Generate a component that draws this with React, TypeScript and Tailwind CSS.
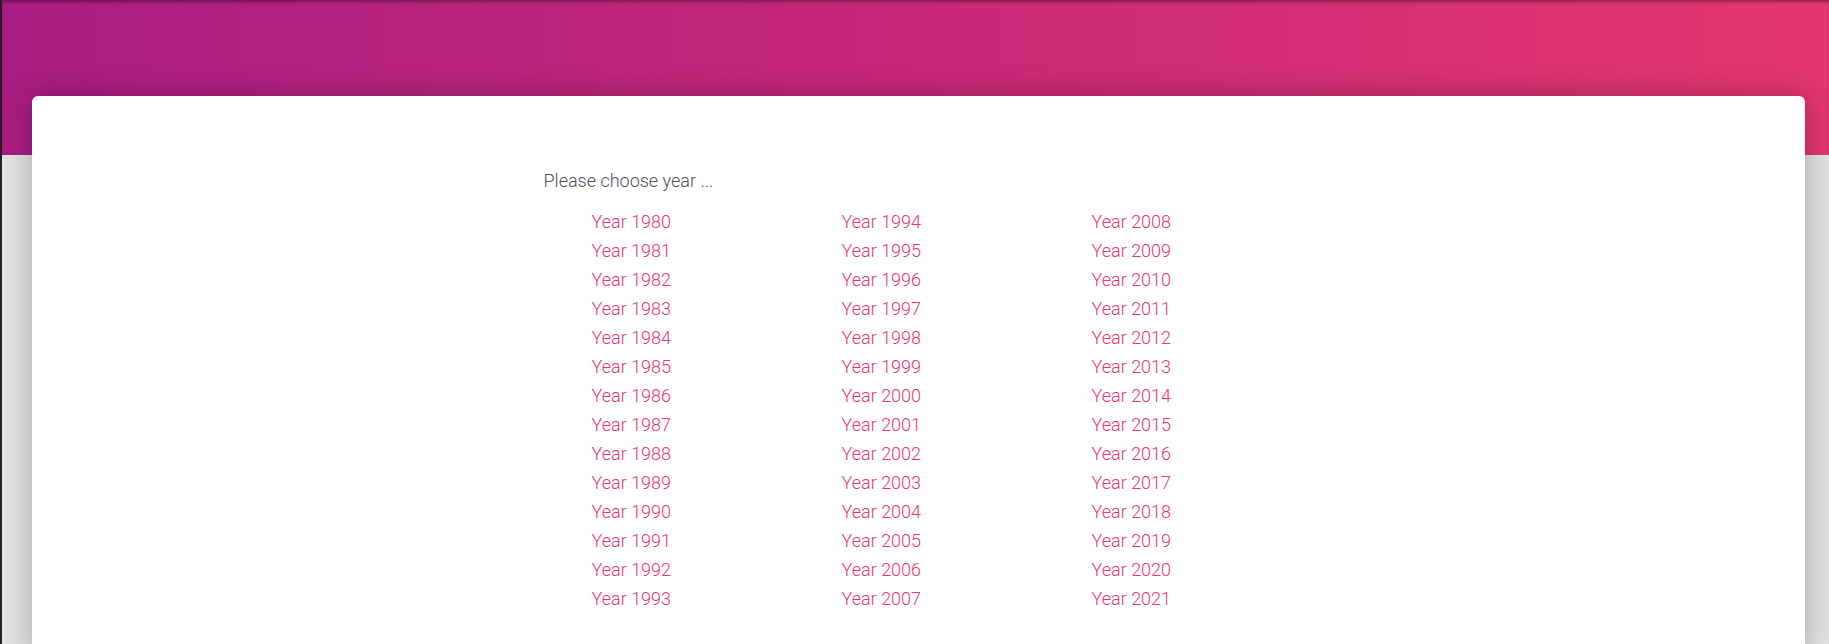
import { FC } from 'react';

// 1980..2021, split into three columns of 14
const years = Array.from({ length: 42 }, (_, i) => 1980 + i);

const App: FC = () => {
  return (
    <div
      className="relative min-h-screen overflow-hidden border-l-2 border-[#2a1c28] bg-[#e2e2e2]"
      style={{ fontFamily: 'Roboto, "Open Sans", sans-serif' }}
    >
      {/* header band */}
      <div className="h-[155px] bg-linear-to-r from-[#a91d82] via-[#c82878] to-[#e3366f] shadow-[inset_0_3px_3px_-1px_rgba(0,0,0,0.35)]" />

      {/* main card overlapping the header */}
      <div className="-mt-[59px] ml-[30px] mr-[24px] min-h-[560px] rounded-md bg-white shadow-[0_0_30px_rgba(0,0,0,0.28)]">
        <div className="mx-auto w-[750px] pt-[70px]">
          <p className="text-[18px] font-light leading-[29px] text-[#4d525d]">Please choose year ...</p>
          <ul className="mt-[12px] grid grid-flow-col grid-rows-[repeat(14,29px)] grid-cols-[250px_250px_250px] pl-[48px]">
            {years.map((y) => (
              <li key={y}>
                <a href="#" className="text-[18px] font-light leading-[29px] text-[#ea3570] hover:underline">
                  Year {y}
                </a>
              </li>
            ))}
          </ul>
        </div>
      </div>
    </div>
  );
};

export default App;
